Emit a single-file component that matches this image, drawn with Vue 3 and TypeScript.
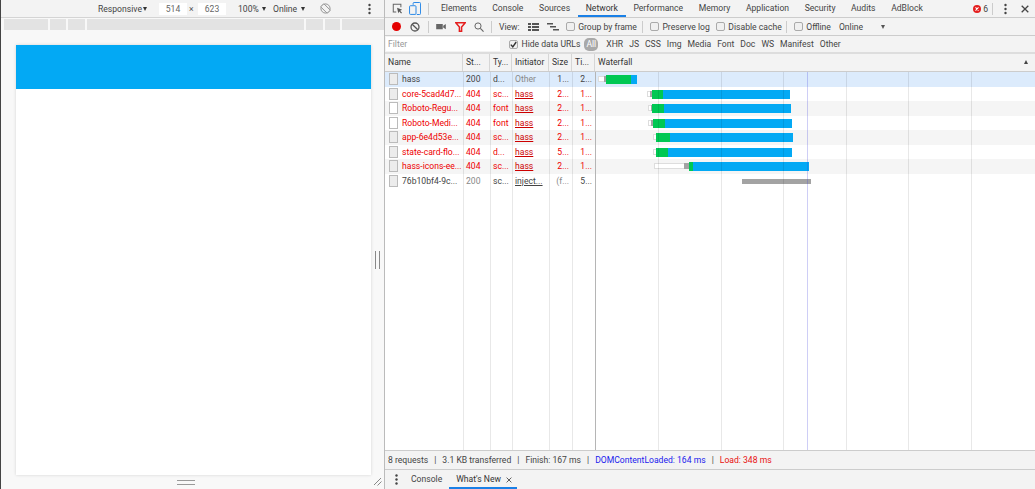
<script setup lang="ts">
interface Seg { c: string; x0: number; x1: number }
interface Row { name: string; status: string; type: string; init: string; size: string; time: string; err?: boolean; sel?: boolean; faded?: boolean; segs: Seg[]; thin?: boolean; blank?: boolean }
const ORIGIN = 595
const rows: Row[] = [
  { name: 'hass', status: '200', type: 'd...', init: 'Other', size: '1...', time: '2...', sel: true, segs: [{ c: 'w', x0: 598, x1: 604 }, { c: 'g', x0: 604, x1: 606 }, { c: 'n', x0: 606, x1: 631 }, { c: 'b', x0: 631, x1: 637 }] },
  { name: 'core-5cad4d7...', status: '404', type: 'sc...', init: 'hass', size: '2...', time: '1...', err: true, segs: [{ c: 'w', x0: 647, x1: 650 }, { c: 'g', x0: 650, x1: 652 }, { c: 'n', x0: 652, x1: 663 }, { c: 'b', x0: 663, x1: 790 }] },
  { name: 'Roboto-Regu...', status: '404', type: 'font', init: 'hass', size: '2...', time: '1...', err: true, blank: true, segs: [{ c: 'w', x0: 648, x1: 651 }, { c: 'g', x0: 651, x1: 652 }, { c: 'n', x0: 652, x1: 664 }, { c: 'b', x0: 664, x1: 791 }] },
  { name: 'Roboto-Medi...', status: '404', type: 'font', init: 'hass', size: '2...', time: '1...', err: true, blank: true, segs: [{ c: 'w', x0: 648, x1: 651 }, { c: 'g', x0: 651, x1: 653 }, { c: 'n', x0: 653, x1: 665 }, { c: 'b', x0: 665, x1: 792 }] },
  { name: 'app-6e4d53e...', status: '404', type: 'sc...', init: 'hass', size: '2...', time: '1...', err: true, segs: [{ c: 'w', x0: 653, x1: 656 }, { c: 'n', x0: 656, x1: 670 }, { c: 'b', x0: 670, x1: 793 }] },
  { name: 'state-card-flo...', status: '404', type: 'd...', init: 'hass', size: '5...', time: '1...', err: true, segs: [{ c: 'w', x0: 653, x1: 656 }, { c: 'n', x0: 656, x1: 668 }, { c: 'b', x0: 668, x1: 792 }] },
  { name: 'hass-icons-ee...', status: '404', type: 'sc...', init: 'hass', size: '2...', time: '1...', err: true, segs: [{ c: 'w', x0: 654, x1: 684 }, { c: 'g', x0: 684, x1: 689 }, { c: 'n', x0: 689, x1: 693 }, { c: 'b', x0: 693, x1: 809 }] },
  { name: '76b10bf4-9c...', status: '200', type: 'sc...', init: 'inject...', size: '(f...', time: '5...', faded: true, thin: true, segs: [{ c: 'g', x0: 742, x1: 811 }] },
]
const grid = [658, 721, 783, 846, 908, 971]
const colSeps = [78, 105, 127, 164, 187]
const tabs = ['Elements', 'Console', 'Sources', 'Network', 'Performance', 'Memory', 'Application', 'Security', 'Audits', 'AdBlock']
const filters = ['XHR', 'JS', 'CSS', 'Img', 'Media', 'Font', 'Doc', 'WS', 'Manifest', 'Other']
const rulerSegs = [44, 16, 17, 217, 17, 15, 44]
</script>

<template>
  <div class="page">
    <section class="device">
      <div class="dev-bar">
        <span class="dev-label">Responsive</span><i class="tri first-tri"></i>
        <span class="dim d1">514</span><span class="times">×</span><span class="dim">623</span>
        <span class="dev-zoom">100%</span><i class="tri dev-tri"></i>
        <span class="dev-online">Online</span><i class="tri dev-tri"></i>
        <svg class="rotate" width="11" height="11" viewBox="0 0 12 12"><circle cx="6" cy="6" r="5" fill="none" stroke="#777" stroke-width=".8"/><rect x="3.6" y="1" width="4.8" height="10" rx=".6" transform="rotate(-45 6 6)" fill="#f3f3f3" stroke="#777" stroke-width=".8"/></svg>
        <svg class="dev-kebab" width="3" height="12" viewBox="0 0 3 12"><g fill="#444"><circle cx="1.5" cy="2" r="1.2"/><circle cx="1.5" cy="6" r="1.2"/><circle cx="1.5" cy="10" r="1.2"/></g></svg>
      </div>
      <div class="ruler"><span v-for="(w, i) in rulerSegs" :key="i" class="rul" :style="{ width: w + 'px' }"></span></div>
      <div class="viewport"><div class="app-head"></div></div>
      <div class="dev-foot">
        <span class="grip-h"></span>
        <svg class="corner" width="9" height="9" viewBox="0 0 9 9"><path d="M1 8 8 1M4.5 8.5 8.5 4.5" stroke="#888" fill="none"/></svg>
      </div>
      <span class="grip-v"></span>
    </section>

    <section class="tools">
      <div class="tabbar">
        <svg class="ic-inspect" width="11" height="11" viewBox="0 0 13 13"><path d="M10.5 5V1.5h-9v9H5" fill="none" stroke="#666" stroke-width="1.2"/><path d="M6 5.5 12 8 9.6 9.2 11.8 11.6 10.8 12.5 8.6 10 7.4 12Z" fill="#555"/></svg>
        <svg class="ic-device" width="12" height="13" viewBox="0 0 13 14"><path d="M4.5 3V1.5a1 1 0 0 1 1-1h6a1 1 0 0 1 1 1v11a1 1 0 0 1-1 1h-3" fill="none" stroke="#1a80e6"/><rect x=".6" y="4" width="7" height="9.4" rx="1" fill="none" stroke="#1a80e6"/></svg>
        <i class="vsep tab-sep"></i>
        <div class="tabs">
          <span v-for="t in tabs" :key="t" class="tab" :class="{ on: t === 'Network' }">{{ t }}</span>
        </div>
        <div class="tab-right">
          <svg width="8" height="8" viewBox="0 0 9 9"><circle cx="4.5" cy="4.5" r="4.5" fill="#e41f1f"/><path d="M2.8 2.8 6.2 6.2M6.2 2.8 2.8 6.2" stroke="#fff" stroke-width="1.2"/></svg>
          <span class="err-n">6</span>
          <i class="vsep"></i>
          <svg class="kebab2" width="3" height="12" viewBox="0 0 3 12"><g fill="#444"><circle cx="1.5" cy="2" r="1.2"/><circle cx="1.5" cy="6" r="1.2"/><circle cx="1.5" cy="10" r="1.2"/></g></svg>
          <svg class="close" width="8" height="8" viewBox="0 0 8 8"><path d="M.7.7 7.3 7.3M7.3.7.7 7.3" stroke="#444" stroke-width="1.3"/></svg>
        </div>
      </div>

      <div class="toolbar">
        <i class="rec"></i>
        <svg class="clr" width="10" height="10" viewBox="0 0 11 11"><circle cx="5.5" cy="5.5" r="4.4" fill="none" stroke="#555" stroke-width="1.4"/><path d="M2.4 2.4 8.6 8.6" stroke="#555" stroke-width="1.4"/></svg>
        <i class="vsep s1"></i>
        <svg class="cam" width="10" height="7" viewBox="0 0 11 8"><path d="M0 1h7.5v6H0zM8 3l3-2v6L8 5z" fill="#666"/></svg>
        <svg class="flt" width="11" height="10" viewBox="0 0 11 10"><path d="M.8.8h9.4L6.6 5v4.2H4.4V5Z" fill="none" stroke="#e41f1f" stroke-width="1.5"/></svg>
        <svg class="srch" width="10" height="10" viewBox="0 0 11 11"><circle cx="4.4" cy="4.4" r="3.4" fill="none" stroke="#666" stroke-width="1.1"/><path d="M7 7 10.5 10.5" stroke="#666" stroke-width="1.3"/></svg>
        <i class="vsep s2"></i>
        <span class="view">View:</span>
        <svg class="v1" width="11" height="8" viewBox="0 0 11 8"><path d="M0 0h3v2H0zM4 0h7v2H4zM0 3h3v2H0zM4 3h7v2H4zM0 6h3v2H0zM4 6h7v2H4z" fill="#555"/></svg>
        <svg class="v2" width="12" height="8" viewBox="0 0 12 8"><path d="M0 0h6v1.6H0zM3 3h6v1.6H3zM6 6h6v1.6H6z" fill="#555"/></svg>
        <label class="cb c1"><i class="box"></i>Group by frame</label>
        <i class="vsep s3"></i>
        <label class="cb c2"><i class="box"></i>Preserve log</label>
        <label class="cb c3"><i class="box"></i>Disable cache</label>
        <i class="vsep s4"></i>
        <label class="cb c4"><i class="box"></i>Offline</label>
        <span class="online">Online</span>
        <i class="tri on-tri"></i>
      </div>

      <div class="filterbar">
        <span class="filter-input">Filter</span>
        <label class="cb hide"><i class="box checked"><svg width="7" height="7" viewBox="0 0 7 7"><path d="M.8 3.6 2.8 5.8 6.2 1" fill="none" stroke="#333" stroke-width="1.4"/></svg></i>Hide data URLs</label>
        <span class="all">All</span>
        <span v-for="f in filters" :key="f" class="ftype">{{ f }}</span>
      </div>

      <div class="net">
        <div class="row head">
          <span class="c name">Name</span><span class="c st">St...</span><span class="c ty">Ty...</span><span class="c ini">Initiator</span><span class="c sz">Size</span><span class="c ti">Ti...</span>
          <span class="c wf">Waterfall<i class="tri up"></i></span>
        </div>
        <div class="body">
          <div v-for="r in rows" :key="r.name" class="row" :class="{ sel: r.sel, err: r.err }">
            <span class="c name"><i class="file" :class="{ blank: r.blank }"></i>{{ r.name }}</span>
            <span class="c st" :class="{ faded: r.faded }">{{ r.status }}</span>
            <span class="c ty">{{ r.type }}</span>
            <span class="c ini" :class="{ link: r.init !== 'Other', faded: r.init === 'Other' }">{{ r.init }}</span>
            <span class="c sz right" :class="{ faded: r.faded }">{{ r.size }}</span>
            <span class="c ti right">{{ r.time }}</span>
            <span class="c wf">
              <i v-for="(s, i) in r.segs" :key="i" class="seg" :class="[s.c, { thin: r.thin }]" :style="{ left: s.x0 - ORIGIN + 'px', width: s.x1 - s.x0 + 'px' }"></i>
            </span>
          </div>
          <div class="cols">
            <i v-for="s in colSeps" :key="s" class="col" :style="{ left: s + 'px' }"></i>
            <i class="col edge"></i>
            <i v-for="g in grid" :key="g" class="col" :style="{ left: g - 385 + 'px' }"></i>
            <i class="col dcl"></i>
          </div>
        </div>
      </div>

      <div class="status">
        <span>8 requests</span><i>|</i><span>3.1 KB transferred</span><i>|</i><span>Finish: 167 ms</span><i>|</i><span class="blue">DOMContentLoaded: 164 ms</span><i>|</i><span class="red">Load: 348 ms</span>
      </div>
      <div class="drawer">
        <svg class="d-kebab" width="3" height="11" viewBox="0 0 3 11"><g fill="#444"><circle cx="1.5" cy="1.5" r="1.2"/><circle cx="1.5" cy="5.5" r="1.2"/><circle cx="1.5" cy="9.5" r="1.2"/></g></svg>
        <span class="d-tab">Console</span>
        <span class="d-tab on">What's New<svg width="6" height="6" viewBox="0 0 7 7"><path d="M.7.7 6.3 6.3M6.3.7.7 6.3" stroke="#555" stroke-width="1.1"/></svg></span>
      </div>
    </section>
  </div>
</template>

<style>
html, body { margin: 0; background: #fff; }
</style>

<style scoped>
.page { display: flex; width: 1035px; height: 489px; overflow: hidden; font: 8.6px/14px Roboto, "Noto Sans", sans-serif; color: #444; }
i { display: block; font-style: normal; }
.tri { width: 0; height: 0; border-left: 2.5px solid transparent; border-right: 2.5px solid transparent; border-top: 4.5px solid #333; }
.vsep { width: 1px; height: 12px; background: #ccc; flex: none; }

.device { position: relative; width: 385px; flex: none; display: flex; flex-direction: column; background: #f8f8f8; border-left: 1px solid #444; border-right: 1px solid #bbb; box-sizing: border-box; }
.dev-bar { height: 18px; flex: none; display: flex; align-items: center; padding-left: 97px; background: #f3f3f3; border-bottom: 1px solid #d4d4d4; box-sizing: border-box; }
.dev-label { width: 44px; }
.first-tri { margin-left: 1px; }
.dev-tri { margin-left: 2px; }
.dim { width: 28px; height: 12px; line-height: 12px; background: #fff; text-align: center; color: #666; }
.d1 { margin-left: 12px; }
.times { margin-left: 2px; width: 9px; color: #555; }
.dev-zoom { margin-left: 12px; width: 22px; }
.dev-online { margin-left: 7px; width: 26px; }
.rotate { margin-left: 15px; }
.dev-kebab { margin-left: 37px; }
.ruler { height: 11px; margin: 1px 0 0 3px; display: flex; gap: 2px; flex: none; width: 380px; }
.rul { background: #e3e3e3; height: 11px; }
.rul:last-child { flex: 1; }
.viewport { flex: none; width: 355px; height: 430px; margin: 15px 0 0 15px; background: #fff; box-shadow: 0 0 3px rgba(0,0,0,.15); }
.app-head { height: 44px; background: #03a9f4; }
.dev-foot { flex: 1; position: relative; display: flex; justify-content: center; padding-right: 13px; align-items: center; }
.grip-h { width: 18px; height: 3px; border-top: 1px solid #999; border-bottom: 1px solid #999; }
.corner { position: absolute; right: 2px; bottom: 3px; }
.grip-v { position: absolute; left: 374px; top: 251px; width: 3px; height: 18px; border-left: 1px solid #888; border-right: 1px solid #888; }

.tools { flex: 1; min-width: 0; display: flex; flex-direction: column; }
.tabbar { height: 18px; flex: none; display: flex; align-items: center; background: #f3f3f3; border-bottom: 1px solid #ccc; box-sizing: border-box; }
.ic-inspect { margin-left: 7px; }
.ic-device { margin-left: 6px; }
.tab-sep { margin-left: 7px; }
.tabs { display: flex; margin-left: 4.2px; height: 100%; }
.tab { padding: 0 7.8px; line-height: 17px; white-space: nowrap; box-sizing: border-box; }
.tab.on { color: #333; box-shadow: inset 0 -2px 0 #1a80e6; }
.tab-right { margin-left: auto; display: flex; align-items: center; padding-right: 6px; }
.err-n { margin-left: 2px; }
.tab-right .vsep { margin-left: 4px; }
.kebab2 { margin-left: 11px; }
.close { margin-left: 14px; }

.toolbar { height: 18px; flex: none; display: flex; align-items: center; background: #f3f3f3; border-bottom: 1px solid #ccc; box-sizing: border-box; }
.rec { width: 9px; height: 9px; border-radius: 50%; background: #e40000; margin-left: 7px; flex: none; }
.clr { margin-left: 9px; }
.s1 { margin-left: 8px; }
.cam { margin-left: 7px; }
.flt { margin-left: 9px; }
.srch { margin-left: 8px; }
.s2 { margin-left: 7px; }
.view { margin-left: 7px; }
.v1 { margin-left: 8px; }
.v2 { margin-left: 8px; }
.cb { display: flex; align-items: center; white-space: nowrap; }
.box { width: 7px; height: 7px; border: 1px solid #aaa; border-radius: 2px; background: #f0f0f0; margin-right: 3.5px; display: flex; align-items: center; justify-content: center; flex: none; }
.c1 { margin-left: 7px; }
.s3 { margin-left: 5px; }
.c2 { margin-left: 7px; }
.c3 { margin-left: 6px; }
.s4 { margin-left: 4px; }
.c4 { margin-left: 7px; }
.online { margin-left: 8px; }
.on-tri { margin-left: 18px; border-top-color: #555; }

.filterbar { height: 18px; flex: none; display: flex; align-items: center; background: #f3f3f3; border-bottom: 2px solid #ddd; box-sizing: border-box; }
.filter-input { width: 112px; padding-left: 2px; height: 14px; background: #fff; color: #999; margin-left: 1px; }
.hide { margin-left: 9px; }
.all { margin: 0 5px 0 4px; width: 14px; height: 13px; line-height: 13px; text-align: center; border-radius: 5px; background: #a9a9a9; color: #fff; flex: none; }
.ftype { padding: 0 3px; color: #444; }

.net { flex: 1; min-height: 0; display: flex; flex-direction: column; }
.row { display: flex; height: 14.5px; line-height: 14.5px; white-space: nowrap; }
.row.head { height: 18px; flex: none; line-height: 17px; background: #f3f3f3; border-bottom: 1px solid #ccc; box-sizing: border-box; color: #333; }
.head .c:not(.wf) { box-shadow: inset -1px 0 #d6d6d6; }
.c { display: block; box-sizing: border-box; padding: 0 3px; overflow: hidden; flex: none; }
.name { width: 78px; display: flex; align-items: center; padding-left: 4px; }
.st { width: 27px; }
.ty { width: 22px; }
.ini { width: 37px; }
.sz { width: 23px; }
.ti { width: 23px; }
.right { text-align: right; }
.wf { flex: 1; position: relative; overflow: visible; }
.head .name { padding-left: 3px; }
.body { position: relative; flex: 1; }
.body .row { position: relative; z-index: 1; }
.body .row:nth-child(odd) { background: #f5f5f5; }
.body .row.sel { background: #dcebfc; }
.err { color: #e00; }
.faded { color: #888; }
.link { text-decoration: underline; }
.err .link { color: #c00; }
.file { width: 7px; height: 10px; border: 1px solid #bbb; background: #ececec; margin-right: 4px; flex: none; }
.file.blank { background: #fff; }
.seg { position: absolute; top: 3px; height: 9px; }
.seg.w { background: #fff; border: 1px solid #ddd; border-right: 0; box-sizing: border-box; top: 4px; height: 6px; }
.seg.g { background: #a3a3a3; top: 4px; height: 6px; }
.seg.n { background: #00c853; }
.seg.b { background: #03a9f4; }
.seg.thin { top: 5px; height: 5px; }
.cols { position: absolute; inset: 0; pointer-events: none; z-index: 2; }
.col { position: absolute; top: 0; bottom: 0; width: 1px; background: rgba(0,0,0,.09); }
.edge { left: 210px; background: #b5b5b5; }
.dcl { left: 422px; background: rgba(60,60,220,.25); }
.up { position: absolute; right: 7px; top: 6px; border-top: 0; border-bottom: 4.5px solid #444; }

.status { height: 19px; flex: none; display: flex; align-items: center; padding-left: 3px; background: #f3f3f3; border-top: 1px solid #ccc; box-sizing: border-box; }
.status i { margin: 0 6px; }
.blue { color: #1a1aee; }
.red { color: #e81010; }
.drawer { height: 20px; flex: none; display: flex; align-items: center; background: #f3f3f3; border-top: 1px solid #ccc; box-sizing: border-box; }
.d-kebab { margin-left: 10px; }
.d-tab { margin-left: 13px; line-height: 19px; display: flex; align-items: center; gap: 5px; }
.d-tab.on { padding: 0 5px 0 7px; color: #333; box-shadow: inset 0 -2px 0 #1a80e6; margin-left: 7px; }
</style>
